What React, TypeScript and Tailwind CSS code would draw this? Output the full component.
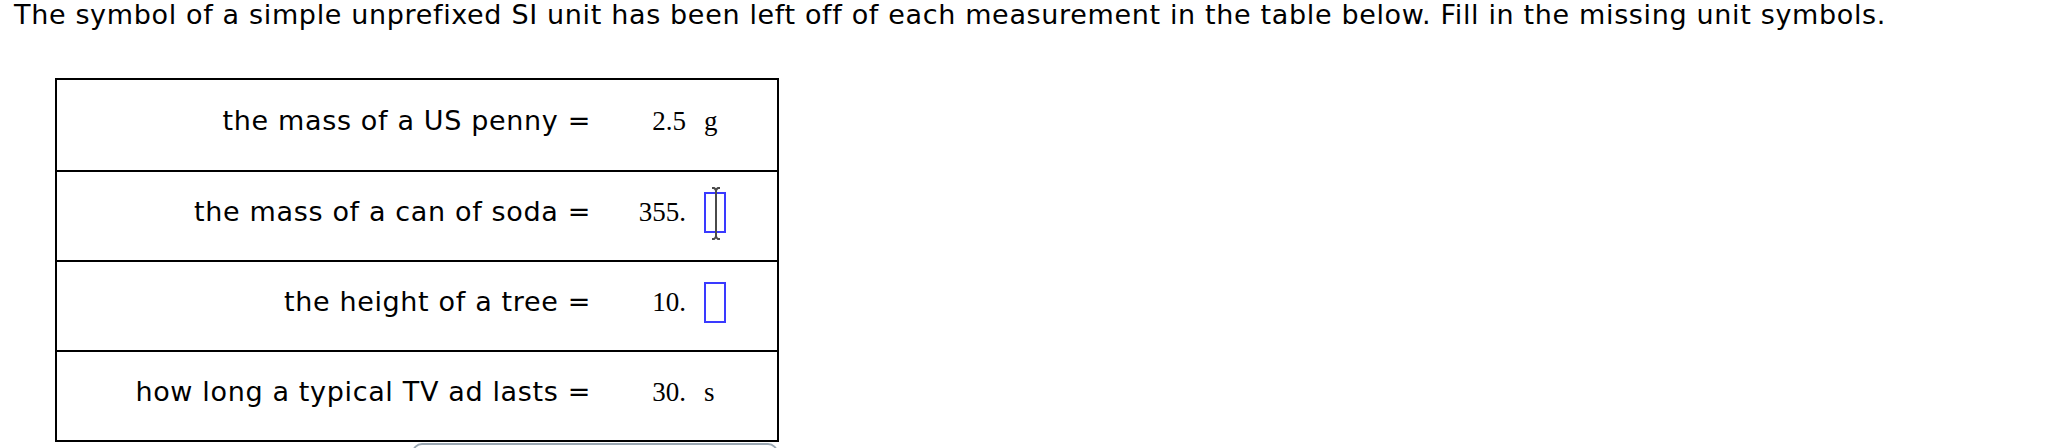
import React from "react";

const rows: { label: string; value: string; unit: string | null; cursor?: boolean }[] = [
  { label: "the mass of a US penny", value: "2.5", unit: "g" },
  { label: "the mass of a can of soda", value: "355.", unit: null, cursor: true },
  { label: "the height of a tree", value: "10.", unit: null },
  { label: "how long a typical TV ad lasts", value: "30.", unit: "s" },
];

function IBeam() {
  return (
    <svg
      className="absolute left-[3px] top-[-7px]"
      width="14"
      height="53"
      viewBox="0 0 14 53"
    >
      <path
        d="M3 1 L5 1 Q7 2 7 4 Q7 2 9 1 L11 1 M7 4 L7 49 M3 52 L5 52 Q7 51 7 49 Q7 51 9 52 L11 52"
        fill="none"
        stroke="#4a4a4a"
        strokeWidth="2"
      />
    </svg>
  );
}

const sans = { fontFamily: '"DejaVu Sans", Verdana, sans-serif', letterSpacing: "0.65px" };
const serif = { fontFamily: '"Liberation Serif", "Times New Roman", serif' };

export default function App() {
  return (
    <div className="w-[2066px] h-[448px] bg-white overflow-hidden relative">
      <p className="pl-[14px] text-[27px] leading-[30px] text-black whitespace-nowrap" style={sans}>
        The symbol of a simple unprefixed SI unit has been left off of each measurement in the table below. Fill in the missing unit symbols.
      </p>
      <div className="ml-[55px] mt-[48px] w-[724px] border-2 border-black">
        {rows.map((r, i) => (
          <div
            key={i}
            className={`flex items-center h-[90px] pb-[8px] ${i > 0 ? "border-t-2 border-black" : ""}`}
          >
            <div className="w-[538px] pr-[4px] text-right text-[27px] text-black whitespace-nowrap" style={sans}>
              {r.label}&nbsp;=
            </div>
            <div className="w-[91px] text-right text-[27px] text-black" style={serif}>
              {r.value}
            </div>
            <div className="ml-[18px] flex items-center">
              {r.unit ? (
                <span className="text-[27px] text-black" style={serif}>
                  {r.unit}
                </span>
              ) : (
                <div className="relative w-[22px] h-[41px] border-2 border-[#3a3aff]">
                  {r.cursor ? <IBeam /> : null}
                </div>
              )}
            </div>
          </div>
        ))}
      </div>
      <div className="absolute left-[412px] top-[443px] w-[366px] h-[20px] rounded-t-[10px] border-2 border-[#9aa7b2]" />
    </div>
  );
}
